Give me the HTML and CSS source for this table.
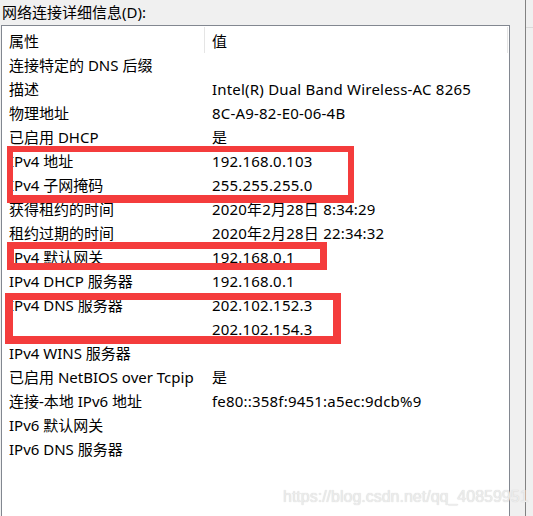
FILE: index.html
```html
<!DOCTYPE html>
<html lang="zh-CN">
<head>
<meta charset="utf-8">
<title>网络连接详细信息</title>
<link rel="stylesheet" href="styles.css">
</head>
<body>
<div class="window">
  <div class="main">
    <div class="title">网络连接详细信息(D):</div>
    <div class="panel">
      <div class="row head"><span class="c1">属性</span><span class="c2">值</span></div>
      <div class="row"><span class="c1">连接特定的 DNS 后缀</span><span class="c2"></span></div>
      <div class="row"><span class="c1">描述</span><span class="c2">Intel(R) Dual Band Wireless-AC 8265</span></div>
      <div class="row"><span class="c1">物理地址</span><span class="c2">8C-A9-82-E0-06-4B</span></div>
      <div class="row"><span class="c1">已启用 DHCP</span><span class="c2">是</span></div>
      <div class="row"><span class="c1">IPv4 地址</span><span class="c2">192.168.0.103</span></div>
      <div class="row"><span class="c1">IPv4 子网掩码</span><span class="c2">255.255.255.0</span></div>
      <div class="row"><span class="c1">获得租约的时间</span><span class="c2">2020年2月28日 8:34:29</span></div>
      <div class="row"><span class="c1">租约过期的时间</span><span class="c2">2020年2月28日 22:34:32</span></div>
      <div class="row"><span class="c1">IPv4 默认网关</span><span class="c2">192.168.0.1</span></div>
      <div class="row"><span class="c1">IPv4 DHCP 服务器</span><span class="c2">192.168.0.1</span></div>
      <div class="row"><span class="c1">IPv4 DNS 服务器</span><span class="c2">202.102.152.3</span></div>
      <div class="row"><span class="c1"></span><span class="c2">202.102.154.3</span></div>
      <div class="row"><span class="c1">IPv4 WINS 服务器</span><span class="c2"></span></div>
      <div class="row"><span class="c1">已启用 NetBIOS over Tcpip</span><span class="c2">是</span></div>
      <div class="row"><span class="c1">连接-本地 IPv6 地址</span><span class="c2">fe80::358f:9451:a5ec:9dcb%9</span></div>
      <div class="row"><span class="c1">IPv6 默认网关</span><span class="c2"></span></div>
      <div class="row"><span class="c1">IPv6 DNS 服务器</span><span class="c2"></span></div>
    </div>
  </div>
  <div class="vline"></div>
  <div class="strip"></div>
</div>
<div class="mark mark-1"></div>
<div class="mark mark-2"></div>
<div class="mark mark-3"></div>
<div class="watermark">https://blog.csdn.net/qq_40859951</div>
</body>
</html>
```
FILE: styles.css
```css
html, body {
  margin: 0;
  padding: 0;
}
body {
  width: 533px;
  height: 516px;
  overflow: hidden;
  background: #f0f0f0;
  font-family: "Noto Sans", "Noto Sans CJK SC", sans-serif;
  font-size: 15px;
  color: #000;
  position: relative;
}
.window {
  display: flex;
  height: 516px;
}
.main {
  width: 525px;
  display: flex;
  flex-direction: column;
}
.title {
  height: 25px;
  line-height: 24px;
  padding-left: 2px;
  box-sizing: border-box;
  white-space: nowrap;
}
.panel {
  margin-left: 1px;
  width: 509px;
  flex: 1;
  box-sizing: border-box;
  background: #fff;
  border: 1px solid #828790;
  border-bottom: none;
  padding-top: 1px;
}
.row {
  display: grid;
  grid-template-columns: 203px 303px;
  height: 24px;
  line-height: 24px;
  white-space: nowrap;
}
.row .c1, .row .c2 {
  padding-left: 7px;
  box-sizing: border-box;
  overflow: visible;
}
.row .c2 {
  letter-spacing: 0.2px;
}
.head {
  height: 26px;
}
.head .c1, .head .c2 {
  padding-top: 2px;
  border-right: 1px solid #e5e5e5;
}
.vline {
  width: 1px;
  background: #828282;
}
.strip {
  flex: 1;
  background: #f0f0f0;
  border-top: 27px solid #f0f0f0;
  box-shadow: inset 0 1px 0 #dadada;
}
.mark {
  position: absolute;
  border-style: solid;
  border-color: #f43c3c;
  box-sizing: border-box;
}
.mark-1 {
  left: 7px;
  top: 146px;
  width: 347px;
  height: 57px;
  border-width: 6px 6px 8px 6px;
}
.mark-2 {
  left: 7px;
  top: 242px;
  width: 320px;
  height: 28px;
  border-width: 7px 7px 7px 7px;
}
.mark-3 {
  left: 5px;
  top: 293px;
  width: 336px;
  height: 51px;
  border-width: 7px 8px 8px 8px;
}
.watermark {
  position: absolute;
  left: 283px;
  top: 487px;
  font-family: "Liberation Sans", Arial, sans-serif;
  font-size: 16px;
  line-height: 20px;
  color: #ececec;
  text-shadow: 0 0 1px #cccccc;
  white-space: nowrap;
}
```
